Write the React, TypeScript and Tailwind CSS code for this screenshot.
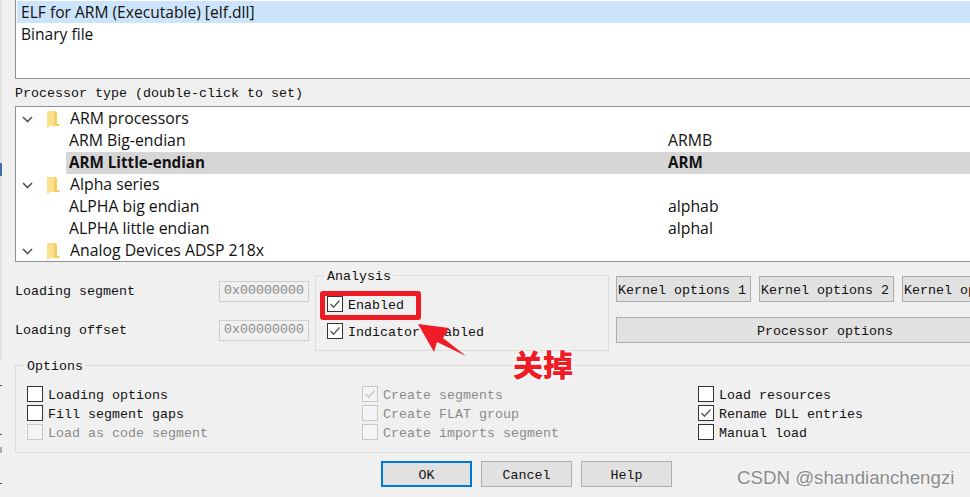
const mono = "font-['Liberation_Mono',monospace] text-[13.33px] leading-[16px]";
const ui = "font-['Open_Sans','Noto_Sans',sans-serif] leading-[22px] text-[#111]";

const treeRows = [
  { label: "ARM processors", folder: true },
  { label: "ARM Big-endian", value: "ARMB" },
  { label: "ARM Little-endian", value: "ARM", selected: true },
  { label: "Alpha series", folder: true },
  { label: "ALPHA big endian", value: "alphab" },
  { label: "ALPHA little endian", value: "alphal" },
  { label: "Analog Devices ADSP 218x", folder: true },
];

const optionColumns = [
  {
    width: "w-[335px]",
    items: [
      { label: "Loading options" },
      { label: "Fill segment gaps" },
      { label: "Load as code segment", disabled: true },
    ],
  },
  {
    width: "w-[336px]",
    items: [
      { label: "Create segments", disabled: true, checked: true },
      { label: "Create FLAT group", disabled: true },
      { label: "Create imports segment", disabled: true },
    ],
  },
  {
    width: "w-[250px]",
    items: [
      { label: "Load resources" },
      { label: "Rename DLL entries", checked: true },
      { label: "Manual load" },
    ],
  },
];

function CheckRow({ label, checked, disabled }: { label: string; checked?: boolean; disabled?: boolean }) {
  return (
    <div className={`flex items-center gap-[5px] h-[16px] ${mono} ${disabled ? "text-[#8a8a8a]" : "text-[#111]"}`}>
      <span
        className={`flex items-center justify-center w-[16px] h-[16px] border ${
          disabled ? "border-[#c8c8c8] bg-[#f4f4f4]" : "border-[#333] bg-white"
        }`}
      >
        {checked && (
          <svg width="12" height="10" viewBox="0 0 12 10" fill="none">
            <path d="M1.5 5 L4.5 8.2 L10.5 1.5" stroke={disabled ? "#c4c4c4" : "#555"} strokeWidth="1.3" />
          </svg>
        )}
      </span>
      <span className="whitespace-nowrap pt-[4px]">{label}</span>
    </div>
  );
}

function Folder() {
  return (
    <svg width="13" height="17" viewBox="0 0 13 17" className="shrink-0">
      <path d="M0 0 H7 V13 H12 V15 H3 L1 17 H0 Z" fill="#fde08c" />
      <path d="M7 0 H9 L10 2 V13 H12.5 V15 H7 Z" fill="#f7cd62" />
    </svg>
  );
}

function Chevron() {
  return (
    <svg width="11" height="7" viewBox="0 0 11 7" fill="none" className="shrink-0">
      <path d="M1 1 L5.5 5.5 L10 1" stroke="#555" strokeWidth="1.6" />
    </svg>
  );
}

function TreeRow({ label, value, folder, selected }: { label: string; value?: string; folder?: boolean; selected?: boolean }) {
  return (
    <div className={`flex items-center h-[22px] ${ui} ${selected ? "font-bold text-[15.2px]" : "text-[15.8px]"}`}>
      <div className="w-[50px] flex items-center pl-[6px] shrink-0">
        {folder && <Chevron />}
        {folder && <span className="w-[14px]" />}
        {folder && <Folder />}
      </div>
      <div className={`flex flex-1 h-full items-center pl-[3px] pb-[2px] ${selected ? "bg-[#d6d6d6]" : ""} ${folder ? "pl-[4px]" : ""}`}>
        <span className="w-[599px] shrink-0 whitespace-nowrap">{label}</span>
        {value && <span>{value}</span>}
      </div>
    </div>
  );
}

function SegmentRow({ label }: { label: string }) {
  return (
    <div className={`flex items-center justify-between w-[294px] h-[20px] ${mono} text-[#111]`}>
      <span className="pt-[1px]">{label}</span>
      <span className="flex items-center justify-center w-[90px] h-[21px] border border-[#cfcfcf] text-[#8a8a8a]">0x00000000</span>
    </div>
  );
}

function Btn({ label, w, focus, className = "" }: { label: string; w: string; focus?: boolean; className?: string }) {
  return (
    <button
      className={`${w} h-[26px] shrink-0 pt-[3px] ${mono} text-[#111] bg-[#e1e1e1] whitespace-nowrap overflow-hidden ${className} ${
        focus ? "border-2 border-[#0078d7]" : "border border-[#adadad]"
      }`}
    >
      {label}
    </button>
  );
}

export default function App() {
  return (
    <div className="relative w-[970px] h-[497px] overflow-hidden bg-[#f0f0f0]">
      <div className="flex flex-col pl-[15px] w-[1040px]">
        {/* loader list */}
        <div className="h-[79px] bg-white border-x border-b border-[#8f8f8f] pt-[1px] pl-[1px]">
          <div className={`h-[22px] pl-[4px] bg-[#cce4fb] text-[15.6px] ${ui}`}>ELF for ARM (Executable) [elf.dll]</div>
          <div className={`h-[22px] pl-[4px] text-[15.6px] ${ui}`}>Binary file</div>
        </div>

        <div className={`mt-[7px] h-[16px] text-[#111] ${mono}`}>Processor type (double-click to set)</div>

        {/* processors */}
        <div className="mt-[4px] h-[156px] bg-white border border-[#8f8f8f] pt-[1px] overflow-hidden">
          {treeRows.map((row) => (
            <TreeRow key={row.label} {...row} />
          ))}
        </div>

        {/* middle */}
        <div className="flex mt-[13px] h-[78px]">
          <div className="flex flex-col gap-[19px] pt-[6px]">
            <SegmentRow label="Loading segment" />
            <SegmentRow label="Loading offset" />
          </div>

          <fieldset className="relative ml-[6px] w-[294px] h-[76px] border border-[#dcdcdc] pl-[11px] pt-[20px]">
            <span className={`absolute left-[8px] -top-[7px] px-[3px] bg-[#f0f0f0] text-[#111] ${mono}`}>Analysis</span>
            <div className="flex flex-col gap-[11px]">
              <CheckRow label="Enabled" checked />
              <CheckRow label="Indicator enabled" checked />
            </div>
          </fieldset>

          <div className="ml-[7px] flex flex-col gap-[15px] pt-[1px]">
            <div className="flex gap-[8px]">
              <Btn label="Kernel options 1" w="w-[135px]" className="pr-[3px]" />
              <Btn label="Kernel options 2" w="w-[135px]" className="pr-[3px]" />
              <Btn label="Kernel options 3" w="w-[135px]" className="pr-[3px]" />
            </div>
            <Btn label="Processor options" w="w-[421px]" className="pr-[3px]" />
          </div>
        </div>

        {/* options */}
        <fieldset className="relative mt-[12px] h-[88px] border border-[#dcdcdc] pl-[11px] pt-[20px] flex">
          <span className={`absolute left-[8px] -top-[7px] px-[3px] bg-[#f0f0f0] text-[#111] ${mono}`}>Options</span>
          <div className="flex">
            {optionColumns.map((col) => (
              <div key={col.items[0].label} className={`${col.width} flex flex-col gap-[3px]`}>
                {col.items.map((item) => (
                  <CheckRow key={item.label} {...item} />
                ))}
              </div>
            ))}
          </div>
        </fieldset>

        <div className="flex gap-[9px] mt-[8px] ml-[366px]">
          <Btn label="OK" w="w-[91px]" focus />
          <Btn label="Cancel" w="w-[91px]" />
          <Btn label="Help" w="w-[91px]" />
        </div>
      </div>

      {/* window behind the dialog */}
      <div className="absolute left-0 top-0 w-[2px] h-[360px] bg-[#e2e2e2]" />
      <div className="absolute left-0 top-[163px] w-[2px] h-[13px] bg-[#3f6fa8]" />
      <div className="absolute left-0 top-[385px] w-[2px] h-px bg-[#555]" />
      <div className="absolute left-0 top-[434px] w-[2px] h-px bg-[#555]" />
      <div className="absolute left-0 top-[447px] w-[2px] h-[6px] bg-[#aaa]" />
      <div className="absolute left-0 top-[483px] w-[2px] h-px bg-[#555]" />

      {/* screenshot annotations */}
      <div className="absolute left-[320px] top-[291px] w-[101px] h-[29px] border-[5px] border-[#ee1c25] rounded-[3px]" />
      <svg className="absolute left-[410px] top-[315px]" width="65" height="50" viewBox="0 0 65 50">
        <path d="M8 9 L24 37 L27 27 L56 41 L33 23 L39 13 Z" fill="#ee1c25" />
      </svg>
      <div className="absolute left-[513px] top-[345px] font-['Noto_Sans_CJK_SC',sans-serif] font-black text-[30px] leading-[36px] text-[#ee1c25] [text-shadow:0_0_3px_#fff,0_0_3px_#fff,0_0_4px_#fff]">
        关掉
      </div>
      <div className="absolute left-[737px] top-[467px] font-['Liberation_Sans',sans-serif] text-[18.7px] leading-[22px] text-[#8c8c8c] [text-shadow:0_0_2px_#fff]">
        CSDN @shandianchengzi
      </div>
    </div>
  );
}
